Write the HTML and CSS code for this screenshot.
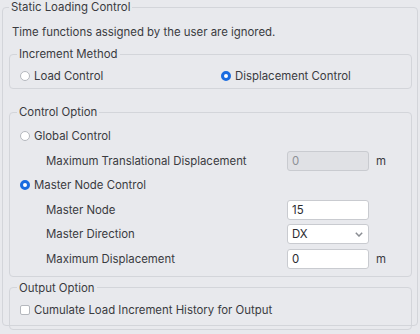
FILE: index.html
```html
<!DOCTYPE html>
<html>
<head>
<meta charset="utf-8">
<link rel="stylesheet" href="styles.css">
</head>
<body>
<fieldset class="group outer">
  <legend class="legend">Static Loading Control</legend>
  <div class="note">Time functions assigned by the user are ignored.</div>

  <fieldset class="group inc">
    <legend class="legend">Increment Method</legend>
    <div class="two-col">
      <label class="opt"><span class="radio"></span>Load Control</label>
      <label class="opt"><span class="radio on"></span>Displacement Control</label>
    </div>
  </fieldset>

  <fieldset class="group ctrl">
    <legend class="legend">Control Option</legend>
    <div class="rows">
      <label class="opt"><span class="radio"></span>Global Control</label>
      <div class="field">
        <span class="flabel">Maximum Translational Displacement</span>
        <span class="input disabled">0</span>
        <span class="unit">m</span>
      </div>
      <label class="opt"><span class="radio on"></span>Master Node Control</label>
      <div class="field">
        <span class="flabel">Master Node</span>
        <span class="input">15</span>
      </div>
      <div class="field">
        <span class="flabel">Master Direction</span>
        <span class="input select">DX
          <svg class="chev" width="8" height="5" viewBox="0 0 8 5"><path d="M0.8 0.8 L4 4 L7.2 0.8" fill="none" stroke="#8a8d93" stroke-width="1.5"/></svg>
        </span>
      </div>
      <div class="field">
        <span class="flabel">Maximum Displacement</span>
        <span class="input">0</span>
        <span class="unit">m</span>
      </div>
    </div>
  </fieldset>

  <fieldset class="group out">
    <legend class="legend">Output Option</legend>
    <div class="inner">
      <label class="opt"><span class="check"></span>Cumulate Load Increment History for Output</label>
    </div>
  </fieldset>
</fieldset>
</body>
</html>
```
FILE: styles.css
```css
html, body {
  margin: 0;
  padding: 0;
  background: #e8e9ed;
}
body {
  font-family: Inter, "Noto Sans", "DejaVu Sans", sans-serif;
  font-size: 11.4px;
  color: #3a3b3f;
  width: 420px;
  height: 334px;
  overflow: hidden;
}
.group {
  border: 1px solid #d3d5da;
  border-radius: 4px;
  margin: 0;
  min-width: 0;
}
.legend {
  padding: 0 2px;
  margin-left: 0;
  line-height: 14px;
  height: 14px;
}
.outer {
  margin: 0 2px;
  padding: 8px 5px 6px 6px;
  height: 326px;
  box-sizing: border-box;
}
.note {
  padding-left: 3px;
  line-height: 20px;
  height: 20px;
}
.inc {
  margin-top: 5px;
  padding: 5px 10px 2px 7px;
}
.two-col {
  display: grid;
  grid-template-columns: 201px auto;
  margin-left: 3px;
}
.opt {
  display: flex;
  align-items: center;
  height: 20px;
  gap: 4px;
}
.radio {
  width: 10px;
  height: 10px;
  box-sizing: border-box;
  border-radius: 50%;
  border: 1px solid #b5b8be;
  background: #fff;
  flex: none;
}
.radio.on {
  border: 3px solid #1a6ce0;
}
.check {
  width: 10px;
  height: 10px;
  box-sizing: border-box;
  border-radius: 2px;
  border: 1px solid #b5b8be;
  background: #fff;
  flex: none;
}
.ctrl {
  margin-top: 16px;
  padding: 7px 10px 7px 7px;
}
.rows {
  display: grid;
  grid-auto-rows: 20px;
  row-gap: 4.6px;
  margin-left: 3px;
}
.field {
  display: flex;
  align-items: center;
  padding-left: 26px;
}
.flabel {
  width: 241px;
}
.input {
  width: 82px;
  height: 20px;
  box-sizing: border-box;
  border: 1px solid #c9cbd0;
  border-radius: 3px;
  background: #fff;
  padding-left: 4px;
  line-height: 18px;
  color: #2b2c30;
  position: relative;
}
.input.disabled {
  background: #e0e1e5;
  color: #8d9096;
}
.chev {
  position: absolute;
  right: 5px;
  top: 7px;
}
.unit {
  margin-left: 7px;
}
.out {
  margin-top: 4px;
  padding: 5px 10px 9px 7px;
}
.inner {
  margin-left: 3px;
}
```
